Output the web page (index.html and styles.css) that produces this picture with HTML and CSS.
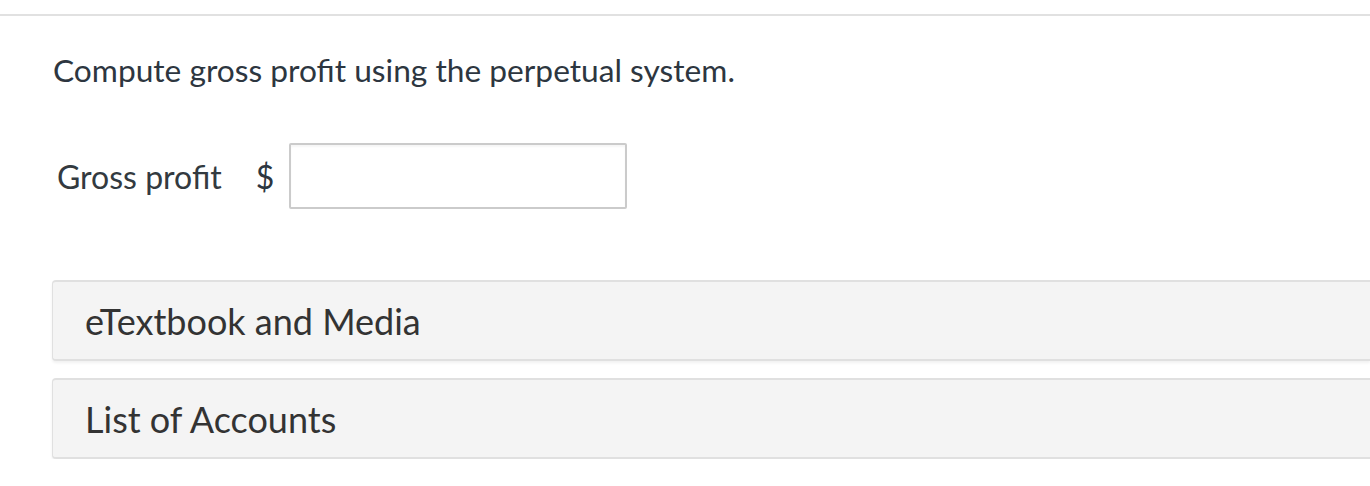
FILE: index.html
```html
<!DOCTYPE html>
<html>
<head>
<meta charset="utf-8">
<link rel="stylesheet" href="styles.css">
</head>
<body>
<div class="page">
  <hr class="rule">
  <p class="question">Compute gross profit using the perpetual system.</p>
  <div class="field-row">
    <span class="label">Gross profit</span>
    <span class="currency">$</span>
    <input class="answer" type="text">
  </div>
  <div class="panels">
    <div class="panel">eTextbook and Media</div>
    <div class="panel">List of Accounts</div>
  </div>
</div>
</body>
</html>
```
FILE: styles.css
```css
html, body {
  margin: 0;
  padding: 0;
  background: #fff;
}
.page {
  font-family: Lato, "Liberation Sans", sans-serif;
  color: #2d3640;
  padding-top: 14px;
  overflow: hidden;
}
.rule {
  margin: 0;
  border: 0;
  border-top: 2px solid #e1e1e1;
}
.question {
  margin: 35px 0 0 53px;
  font-size: 31.7px;
  line-height: 1.2;
}
.field-row {
  display: flex;
  align-items: center;
  margin: 0 0 0 57px;
  padding-top: 54px;
}
.label {
  font-size: 32px;
  color: #333a40;
}
.currency {
  font-size: 32px;
  margin-left: 34px;
  margin-right: 15px;
}
.answer {
  width: 338px;
  height: 66px;
  box-sizing: border-box;
  border: 2px solid #cbcbcb;
  border-radius: 2px;
  box-shadow: inset 0 2px 2px rgba(0,0,0,0.04);
  margin: 0;
  padding: 0;
}
.panels {
  display: flex;
  flex-direction: column;
  gap: 17px;
  margin: 71px 0 0 52px;
}
.panel {
  height: 81px;
  box-sizing: border-box;
  background: #f4f4f4;
  border: 1px solid #e0e0e0;
  border-top-width: 2px;
  border-bottom-width: 2px;
  border-right: 0;
  border-radius: 4px 0 0 4px;
  box-shadow: 0 2px 3px rgba(0,0,0,0.06);
  display: flex;
  align-items: center;
  padding-left: 32px;
  font-size: 36px;
  color: #333;
}
```
